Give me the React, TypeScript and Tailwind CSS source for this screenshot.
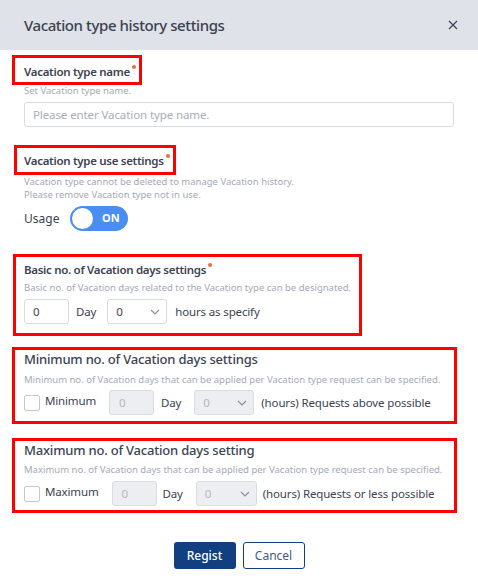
import React from "react";

const Chevron = () => (
  <svg width="10" height="6" viewBox="0 0 10 6" fill="none">
    <path d="M1 1l4 4 4-4" stroke="#8a909c" strokeWidth="1.2" />
  </svg>
);

const Dot = () => (
  <span className="inline-block w-[4px] h-[4px] rounded-full bg-[#f06a3a] ml-[2px] mt-[1px]" />
);

export default function App() {
  return (
    <div
      className="w-[478px] h-[586px] bg-white text-[#3b4252] overflow-hidden"
      style={{ fontFamily: '"Noto Sans", "Open Sans", sans-serif' }}
    >
      <div className="h-[50px] bg-[#dfe2e8] flex items-center justify-between pl-6 pr-[20px]">
        <div className="text-[15px] tracking-[-0.4px] font-medium text-[#3a4150]">Vacation type history settings</div>
        <svg width="10" height="10" viewBox="0 0 10 10">
          <path d="M1 1l8 8M9 1l-8 8" stroke="#3f4757" strokeWidth="1.3" />
        </svg>
      </div>

      <div className="px-6 flex flex-col">
        {/* Section 1 */}
        <div className="mt-[5px] -ml-[12px] w-fit border-[3px] border-[#ff0000] pl-[9px] pr-[3px] pt-[6px] pb-[2px]">
          <div className="text-[11.5px] tracking-[-0.3px] leading-[16px] font-semibold flex items-start">
            Vacation type name
            <Dot />
          </div>
        </div>
        <div className="text-[9.5px] leading-[12px] text-[#a3aab8]">Set Vacation type name.</div>
        <div className="mt-[5px] h-[25px] border border-[#d8dce3] rounded-[3px] flex items-center pl-[8px] text-[11.5px] tracking-[-0.1px] text-[#a8adb8]">
          Please enter Vacation type name.
        </div>

        {/* Section 2 */}
        <div className="mt-[18px] -ml-[10px] w-fit border-[3px] border-[#ff0000] pl-[7px] pr-[3px] pt-[5px] pb-[3px]">
          <div className="text-[11.5px] tracking-[-0.3px] leading-[16px] font-semibold flex items-start">
            Vacation type use settings
            <Dot />
          </div>
        </div>
        <div className="text-[9.5px] leading-[13px] text-[#a3aab8]">
          <div>Vacation type cannot be deleted to manage Vacation history.</div>
          <div>Please remove Vacation type not in use.</div>
        </div>
        <div className="mt-[5px] flex items-center h-[25px]">
          <span className="text-[12px] w-[46px]">Usage</span>
          <div className="w-[58px] h-[25px] rounded-full bg-[#4a8ef5] flex items-center px-[2px]">
            <div className="w-[21px] h-[21px] rounded-full bg-white" />
            <span className="ml-[9px] text-[11px] font-bold text-white">ON</span>
          </div>
        </div>

        {/* Section 3 */}
        <div className="mt-[23px] -ml-[11px] w-[349px] border-[3px] border-[#ff0000] pl-[8px] pt-[5px] pb-[9px]">
          <div className="text-[11.5px] tracking-[-0.3px] leading-[16px] font-semibold flex items-start">
            Basic no. of Vacation days settings
            <Dot />
          </div>
          <div className="mt-[3px] text-[9.5px] leading-[13px] text-[#a3aab8]">
            Basic no. of Vacation days related to the Vacation type can be designated.
          </div>
          <div className="mt-[5px] flex items-center h-[25px] text-[11.5px] tracking-[-0.15px]">
            <div className="w-[45px] h-[25px] border border-[#d8dce3] rounded-[3px] flex items-center pl-[8px]">0</div>
            <span className="ml-[7px]">Day</span>
            <div className="ml-[11px] w-[60px] h-[25px] border border-[#d8dce3] rounded-[3px] flex items-center justify-between pl-[8px] pr-[6px]">
              <span>0</span>
              <Chevron />
            </div>
            <span className="ml-[8px]">hours as specify</span>
          </div>
        </div>

        {/* Section 4 */}
        <div className="mt-[11px] -ml-[12px] w-[445px] border-[3px] border-[#ff0000] pl-[9px] pb-[6px]">
          <div className="text-[13px] tracking-[-0.2px] leading-[18px] font-medium">Minimum no. of Vacation days settings</div>
          <div className="mt-[5px] text-[9.5px] leading-[13px] text-[#a3aab8]">
            Minimum no. of Vacation days that can be applied per Vacation type request can be specified.
          </div>
          <div className="mt-[4px] flex items-center h-[25px] text-[11.5px] tracking-[-0.15px]">
            <div className="w-[16px] h-[16px] border border-[#c4c8d0] rounded-[2px]" />
            <span className="ml-[5px] -translate-y-[2px]">Minimum</span>
            <div className="ml-[13px] w-[45px] h-[25px] border border-[#d8dce3] bg-[#eceef1] rounded-[3px] flex items-center pl-[9px] text-[#b3b8c2]">0</div>
            <span className="ml-[7px]">Day</span>
            <div className="ml-[13px] w-[60px] h-[25px] border border-[#d8dce3] bg-[#eceef1] rounded-[3px] flex items-center justify-between pl-[8px] pr-[6px] text-[#b3b8c2]">
              <span>0</span>
              <Chevron />
            </div>
            <span className="ml-[7px]">(hours) Requests above possible</span>
          </div>
        </div>

        {/* Section 5 */}
        <div className="mt-[14px] -ml-[12px] w-[445px] border-[3px] border-[#ff0000] pl-[9px] pb-[4px]">
          <div className="text-[13px] tracking-[-0.2px] leading-[18px] font-medium">Maximum no. of Vacation days setting</div>
          <div className="mt-[4px] text-[9.5px] leading-[13px] text-[#a3aab8]">
            Maximum no. of Vacation days that can be applied per Vacation type request can be specified.
          </div>
          <div className="mt-[5px] flex items-center h-[25px] text-[11.5px] tracking-[-0.15px]">
            <div className="w-[16px] h-[16px] border border-[#c4c8d0] rounded-[2px]" />
            <span className="ml-[5px] -translate-y-[2px]">Maximum</span>
            <div className="ml-[13px] w-[45px] h-[25px] border border-[#d8dce3] bg-[#eceef1] rounded-[3px] flex items-center pl-[9px] text-[#b3b8c2]">0</div>
            <span className="ml-[6px]">Day</span>
            <div className="ml-[13px] w-[61px] h-[25px] border border-[#d8dce3] bg-[#eceef1] rounded-[3px] flex items-center justify-between pl-[8px] pr-[6px] text-[#b3b8c2]">
              <span>0</span>
              <Chevron />
            </div>
            <span className="ml-[6px]">(hours) Requests or less possible</span>
          </div>
        </div>

        {/* Buttons */}
        <div className="mt-[29px] flex justify-center gap-[7px]">
          <button className="w-[62px] h-[27px] rounded-[3px] bg-[#123f80] text-white text-[12px] font-medium">Regist</button>
          <button className="w-[62px] h-[27px] rounded-[3px] border border-[#123f80] bg-white text-[#3f5a8a] text-[12px]">Cancel</button>
        </div>
      </div>
    </div>
  );
}
